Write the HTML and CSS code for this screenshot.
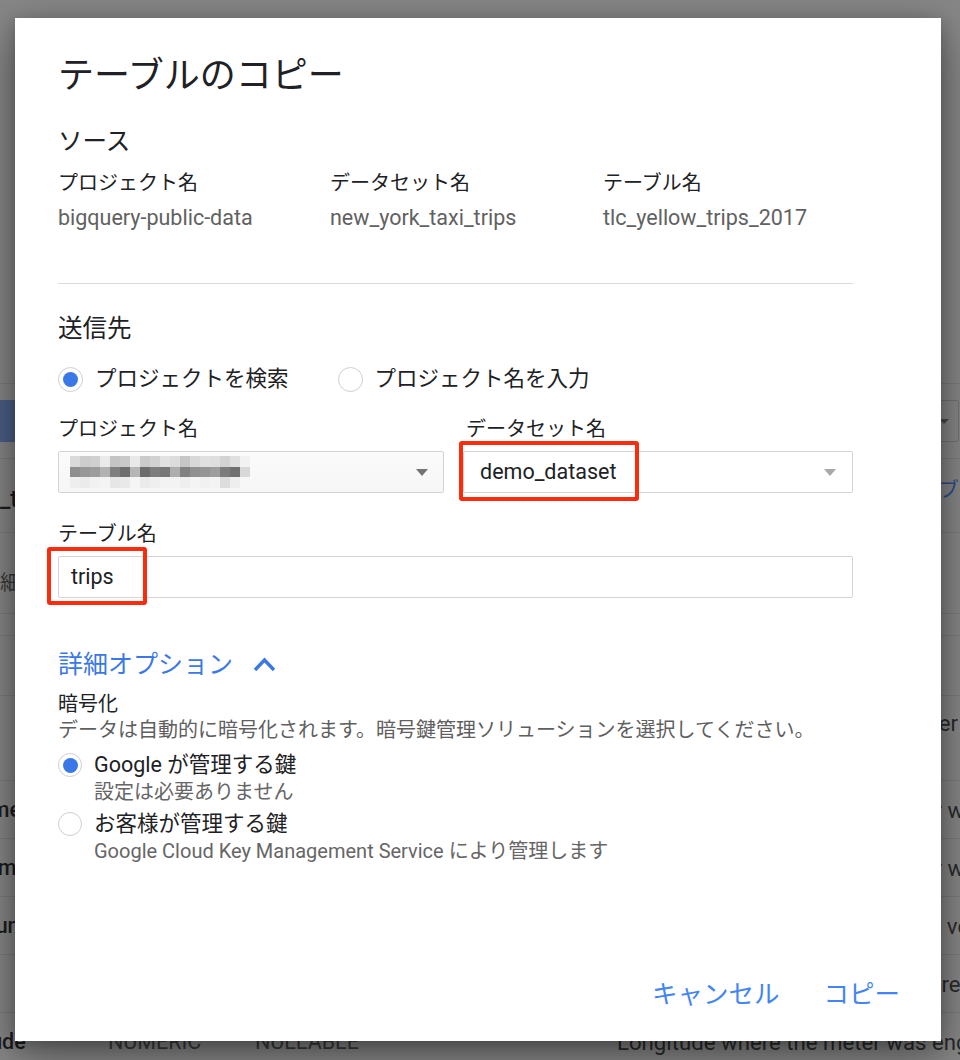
FILE: index.html
```html
<!DOCTYPE html>
<html lang="ja">
<head>
<meta charset="utf-8">
<title>テーブルのコピー</title>
<link rel="stylesheet" href="styles.css">
</head>
<body>
<div class="page">
  <div class="bg-row bg-top"></div>
  <div class="bg-row bg-toolbar">
    <span class="bg-btn"></span>
    <span class="bg-select"><span class="bg-caret"></span></span>
  </div>
  <div class="bg-row bg-heading">
    <span class="bg-name">_trips_2017</span>
    <span class="bg-link">テーブル</span>
  </div>
  <div class="bg-row bg-tabs">
    <span class="bg-tab">細</span>
  </div>
  <div class="bg-row bg-gap"></div>
  <div class="bg-row bg-colhead"></div>
  <div class="schema">
    <div class="s-row s-tall"><span class="s-name">vendor_id</span><span class="s-type">STRING</span><span class="s-mode">REQUIRED</span><span class="s-desc">A code denoting the LPEP provider that provided the record.</span></div>
    <div class="s-row"><span class="s-name">pickup_datetime</span><span class="s-type">DATETIME</span><span class="s-mode">NULLABLE</span><span class="s-desc">The date &amp; times when the meter was engaged.</span></div>
    <div class="s-row"><span class="s-name">dropoff_datetime</span><span class="s-type">DATETIME</span><span class="s-mode">NULLABLE</span><span class="s-desc">The date &amp; times when the meter was disengaged.</span></div>
    <div class="s-row"><span class="s-name">passenger_count</span><span class="s-type">INTEGER</span><span class="s-mode">NULLABLE</span><span class="s-desc">The number of passengers in the vehicle.</span></div>
    <div class="s-row"><span class="s-name">trip_distance</span><span class="s-type">NUMERIC</span><span class="s-mode">NULLABLE</span><span class="s-desc">The elapsed trip distance in kms reported.</span></div>
    <div class="s-row"><span class="s-name">pickup_longitude</span><span class="s-type">NUMERIC</span><span class="s-mode">NULLABLE</span><span class="s-desc">Longitude where the meter was engaged.</span></div>
  </div>
</div>

<div class="dialog">
  <div class="dlg-body">
    <h1 class="dlg-title">テーブルのコピー</h1>

    <h2 class="section-title">ソース</h2>
    <div class="source-grid">
      <div class="src-col">
        <div class="field-label">プロジェクト名</div>
        <div class="src-value">bigquery-public-data</div>
      </div>
      <div class="src-col">
        <div class="field-label">データセット名</div>
        <div class="src-value">new_york_taxi_trips</div>
      </div>
      <div class="src-col">
        <div class="field-label">テーブル名</div>
        <div class="src-value">tlc_yellow_trips_2017</div>
      </div>
    </div>

    <hr class="divider">

    <h2 class="section-title dest-title">送信先</h2>
    <div class="radio-row">
      <label class="radio checked"><span class="radio-circle"></span><span class="radio-text">プロジェクトを検索</span></label>
      <label class="radio"><span class="radio-circle"></span><span class="radio-text">プロジェクト名を入力</span></label>
    </div>

    <div class="select-grid">
      <div class="field">
        <div class="field-label">プロジェクト名</div>
        <div class="select select-muted">
          <svg class="mosaic" width="190" height="32" viewBox="0 0 190 32" aria-hidden="true">
            <defs><filter id="soft"><feGaussianBlur stdDeviation="0.6"/></filter></defs>
            <g filter="url(#soft)" shape-rendering="crispEdges">
              <rect x="0" y="0" width="10" height="11" fill="#dadada"/>
              <rect x="10" y="0" width="10" height="11" fill="#cdcdcd"/>
              <rect x="20" y="0" width="10" height="11" fill="#d0d0d0"/>
              <rect x="30" y="0" width="10" height="11" fill="#eaeaea"/>
              <rect x="40" y="0" width="10" height="11" fill="#c4c4c4"/>
              <rect x="50" y="0" width="10" height="11" fill="#c9c9c9"/>
              <rect x="60" y="0" width="10" height="11" fill="#e9e9e9"/>
              <rect x="70" y="0" width="10" height="11" fill="#cacaca"/>
              <rect x="80" y="0" width="10" height="11" fill="#d1d1d1"/>
              <rect x="90" y="0" width="10" height="11" fill="#e2e2e2"/>
              <rect x="100" y="0" width="10" height="11" fill="#dcdcdc"/>
              <rect x="110" y="0" width="10" height="11" fill="#c6c6c6"/>
              <rect x="120" y="0" width="10" height="11" fill="#d8d8d8"/>
              <rect x="130" y="0" width="10" height="11" fill="#e0e0e0"/>
              <rect x="140" y="0" width="10" height="11" fill="#dedede"/>
              <rect x="150" y="0" width="10" height="11" fill="#d3d3d3"/>
              <rect x="160" y="0" width="10" height="11" fill="#e0e0e0"/>
              <rect x="170" y="0" width="10" height="11" fill="#f2f2f2"/>

              <rect x="0" y="11" width="10" height="10" fill="#8e8e8e"/>
              <rect x="10" y="11" width="10" height="10" fill="#979797"/>
              <rect x="20" y="11" width="10" height="10" fill="#9c9c9c"/>
              <rect x="30" y="11" width="10" height="10" fill="#b2b2b2"/>
              <rect x="40" y="11" width="10" height="10" fill="#7f7f7f"/>
              <rect x="50" y="11" width="10" height="10" fill="#6e6e6e"/>
              <rect x="60" y="11" width="10" height="10" fill="#b6b6b6"/>
              <rect x="70" y="11" width="10" height="10" fill="#6c6c6c"/>
              <rect x="80" y="11" width="10" height="10" fill="#7d7d7d"/>
              <rect x="90" y="11" width="10" height="10" fill="#787878"/>
              <rect x="100" y="11" width="10" height="10" fill="#adadad"/>
              <rect x="110" y="11" width="10" height="10" fill="#818181"/>
              <rect x="120" y="11" width="10" height="10" fill="#909090"/>
              <rect x="130" y="11" width="10" height="10" fill="#959595"/>
              <rect x="140" y="11" width="10" height="10" fill="#9d9d9d"/>
              <rect x="150" y="11" width="10" height="10" fill="#7c7c7c"/>
              <rect x="160" y="11" width="10" height="10" fill="#6f6f6f"/>
              <rect x="170" y="11" width="10" height="10" fill="#d8d8d8"/>

              <rect x="0" y="21" width="10" height="11" fill="#eeeeee"/>
              <rect x="10" y="21" width="10" height="11" fill="#ebebeb"/>
              <rect x="20" y="21" width="10" height="11" fill="#f1f1f1"/>
              <rect x="30" y="21" width="10" height="11" fill="#f4f4f4"/>
              <rect x="40" y="21" width="10" height="11" fill="#e6e6e6"/>
              <rect x="50" y="21" width="10" height="11" fill="#e9e9e9"/>
              <rect x="60" y="21" width="10" height="11" fill="#f5f5f5"/>
              <rect x="70" y="21" width="10" height="11" fill="#ebebeb"/>
              <rect x="80" y="21" width="10" height="11" fill="#efefef"/>
              <rect x="90" y="21" width="10" height="11" fill="#f3f3f3"/>
              <rect x="100" y="21" width="10" height="11" fill="#f3f3f3"/>
              <rect x="110" y="21" width="10" height="11" fill="#eeeeee"/>
              <rect x="120" y="21" width="10" height="11" fill="#f4f4f4"/>
              <rect x="130" y="21" width="10" height="11" fill="#f1f1f1"/>
              <rect x="140" y="21" width="10" height="11" fill="#f3f3f3"/>
              <rect x="150" y="21" width="10" height="11" fill="#dddddd"/>
              <rect x="160" y="21" width="10" height="11" fill="#eeeeee"/>
              <rect x="170" y="21" width="10" height="11" fill="#f7f7f7"/>
            </g>
          </svg>
          <span class="caret"></span>
        </div>
      </div>
      <div class="field">
        <div class="field-label field-label-2">データセット名</div>
        <div class="select">
          <span class="select-text">demo_dataset</span>
          <span class="caret caret-light"></span>
          <span class="highlight hl-dataset"></span>
        </div>
      </div>
    </div>

    <div class="field table-field">
      <div class="field-label">テーブル名</div>
      <div class="text-input">
        <span class="input-text">trips</span>
        <span class="highlight hl-table"></span>
      </div>
    </div>

    <div class="advanced">
      <span>詳細オプション</span>
      <svg class="chevron" width="23" height="16" viewBox="0 0 23 16" aria-hidden="true">
        <path d="M2 14 L11.5 4 L21 14" fill="none" stroke="#3b78e7" stroke-width="3.4"/>
      </svg>
    </div>

    <div class="enc-title">暗号化</div>
    <div class="enc-desc">データは自動的に暗号化されます。暗号鍵管理ソリューションを選択してください。</div>

    <div class="enc-option enc-first">
      <span class="radio-circle checked-circle"></span>
      <div class="enc-text">
        <div class="enc-label">Google が管理する鍵</div>
        <div class="enc-sub">設定は必要ありません</div>
      </div>
    </div>
    <div class="enc-option enc-second">
      <span class="radio-circle"></span>
      <div class="enc-text">
        <div class="enc-label">お客様が管理する鍵</div>
        <div class="enc-sub">Google Cloud Key Management Service により管理します</div>
      </div>
    </div>
  </div>

  <div class="dlg-actions">
    <button class="btn">キャンセル</button>
    <button class="btn">コピー</button>
  </div>
</div>
</body>
</html>
```

FILE: styles.css
```css
html, body {
  margin: 0;
  padding: 0;
}

body {
  width: 960px;
  height: 1060px;
  overflow: hidden;
  font-family: Roboto, "Noto Sans CJK JP", sans-serif;
  color: #202124;
}

/* ---------- background page (under the scrim) ---------- */
.page {
  width: 960px;
  height: 1060px;
  overflow: hidden;
  background: #878787;
  display: flex;
  flex-direction: column;
  font-size: 21.5px;
  color: #262626;
}

.bg-row {
  flex: none;
  box-sizing: border-box;
  display: grid;
  grid-template-columns: 900px 60px;
  border-top: 1px solid #7b7b7b;
}

.bg-top {
  height: 383px;
  border-top: none;
}

.bg-toolbar {
  height: 75px;
}

.bg-btn {
  margin-top: 16px;
  width: 60px;
  height: 42px;
  background: #4d5f88;
  border-radius: 0 3px 3px 0;
}

.bg-select {
  margin-top: 16px;
  width: 59px;
  height: 42px;
  box-sizing: border-box;
  border: 1px solid #727272;
  border-radius: 2px;
  display: flex;
  align-items: center;
  padding-left: 38px;
}

.bg-caret {
  width: 0;
  height: 0;
  border-left: 5px solid transparent;
  border-right: 5px solid transparent;
  border-top: 5px solid #4a4a4a;
}

.bg-heading {
  height: 74px;
}

.bg-name {
  margin-top: 27px;
  font-size: 23px;
  font-weight: 500;
  line-height: 28px;
  color: #1c1c1c;
  white-space: nowrap;
}

.bg-link {
  margin-top: 18px;
  font-size: 20px;
  line-height: 26px;
  color: #2d4b8c;
  white-space: nowrap;
}

.bg-tabs {
  height: 81px;
}

.bg-tab {
  margin-top: 37px;
  font-size: 20px;
  line-height: 26px;
  color: #3a3a3a;
}

.bg-gap {
  height: 22px;
}

.bg-colhead {
  height: 60px;
}

.schema {
  margin-left: -138px;
  width: 1098px;
  display: flex;
  flex-direction: column;
}

.s-row {
  flex: none;
  box-sizing: border-box;
  height: 58px;
  border-top: 1px solid #7b7b7b;
  display: grid;
  grid-template-columns: 246px 147px 362px 1fr;
  align-items: center;
  white-space: nowrap;
  line-height: 28px;
}

.s-tall {
  height: 85px;
  align-items: start;
  padding-top: 13px;
}

.s-name {
  font-weight: 500;
  color: #1c1c1c;
}

.s-type,
.s-mode {
  color: #3a3a3a;
}

.s-desc {
  font-size: 22.2px;
  color: #2a2a2a;
}

/* ---------- dialog ---------- */
.dialog {
  position: absolute;
  left: 15px;
  top: 18px;
  width: 926px;
  height: 1023px;
  background: #ffffff;
  box-shadow: 0 14px 44px rgba(0, 0, 0, 0.42), 0 4px 14px rgba(0, 0, 0, 0.22);
  display: flex;
  flex-direction: column;
}

.dlg-body {
  padding: 36px 88px 0 43px;
  display: flex;
  flex-direction: column;
}

.dlg-title {
  margin: 0;
  font-size: 36px;
  line-height: 44px;
  font-weight: 400;
  color: #202124;
}

.section-title {
  margin: 28px 0 0;
  font-size: 24.5px;
  line-height: 32px;
  font-weight: 400;
  color: #202124;
}

.dest-title {
  margin-top: 29px;
}

.source-grid {
  margin-top: 12px;
  display: grid;
  grid-template-columns: 272px 273px 1fr;
}

.field-label {
  font-size: 20px;
  line-height: 26px;
  color: #202124;
}

.src-value {
  margin-top: 8px;
  font-size: 21.5px;
  line-height: 28px;
  color: #616161;
  white-space: nowrap;
}

.divider {
  margin: 51px 0 0;
  border: none;
  border-top: 1.5px solid #dadada;
  height: 0;
}

.radio-row {
  margin-top: 20px;
  height: 28px;
  display: flex;
  align-items: center;
  gap: 49px;
}

.radio {
  display: flex;
  align-items: center;
  gap: 12px;
}

.radio-text {
  font-size: 21.5px;
  line-height: 28px;
  color: #202124;
}

.radio-circle {
  flex: none;
  width: 25px;
  height: 25px;
  box-sizing: border-box;
  border: 1.5px solid #cfcfcf;
  border-radius: 50%;
  background: #ffffff;
  display: flex;
  align-items: center;
  justify-content: center;
}

.radio.checked .radio-circle::after,
.checked-circle::after {
  content: "";
  width: 15px;
  height: 15px;
  border-radius: 50%;
  background: #3b78e7;
}

.select-grid {
  margin-top: 23px;
  display: grid;
  grid-template-columns: 386px 1fr;
  column-gap: 19px;
}

.field-label-2 {
  padding-left: 3px;
}

.select,
.text-input {
  position: relative;
  margin-top: 9px;
  height: 42px;
  box-sizing: border-box;
  border: 1.5px solid #d4d4d4;
  border-radius: 2px;
  background: #ffffff;
  display: flex;
  align-items: center;
}

.select-muted {
  background: linear-gradient(#fbfbfb, #f6f6f6);
}

.mosaic {
  margin-left: 11px;
  flex: none;
}

.select-text {
  padding-left: 16px;
  font-size: 21.5px;
  line-height: 28px;
  color: #202124;
}

.caret {
  margin-left: auto;
  margin-right: 15px;
  width: 0;
  height: 0;
  border-left: 6.5px solid transparent;
  border-right: 6.5px solid transparent;
  border-top: 7px solid #757575;
}

.caret-light {
  margin-right: 16px;
  border-top-color: #a8a8a8;
}

.table-field {
  margin-top: 28px;
}

.text-input .input-text {
  padding-left: 12px;
  font-size: 21.5px;
  line-height: 28px;
  color: #202124;
}

.highlight {
  position: absolute;
  box-sizing: border-box;
  border: 4px solid #fb2b0d;
  border-radius: 3px;
  pointer-events: none;
}

.hl-dataset {
  left: -5px;
  top: -11px;
  width: 180px;
  height: 60px;
}

.hl-table {
  left: -12px;
  top: -10px;
  width: 100px;
  height: 58px;
}

.advanced {
  margin-top: 51px;
  display: flex;
  align-items: center;
  gap: 20px;
  font-size: 25px;
  line-height: 32px;
  color: #3b78e7;
}

.chevron {
  flex: none;
  margin-top: -2px;
}

.enc-title {
  margin-top: 10px;
  font-size: 20px;
  line-height: 26px;
  color: #202124;
}

.enc-desc {
  font-size: 20px;
  line-height: 26px;
  color: #5f5f5f;
  white-space: nowrap;
}

.enc-option {
  display: grid;
  grid-template-columns: 36px 1fr;
  align-items: start;
}

.enc-option .radio-circle {
  width: 24px;
  height: 24px;
  margin-top: 1px;
}

.enc-first {
  margin-top: 9px;
}

.enc-second {
  margin-top: 6px;
}

.enc-label {
  font-size: 21.5px;
  line-height: 26px;
  color: #202124;
}

.enc-sub {
  margin-top: 1px;
  font-size: 20px;
  line-height: 26px;
  color: #666666;
  white-space: nowrap;
}

.dlg-actions {
  margin-top: auto;
  padding: 0 33px 27px 0;
  display: flex;
  justify-content: flex-end;
  gap: 28px;
}

.btn {
  padding: 0 8px;
  border: none;
  background: none;
  font-family: inherit;
  font-size: 25.5px;
  line-height: 40px;
  color: #4285f4;
  cursor: pointer;
}
```
